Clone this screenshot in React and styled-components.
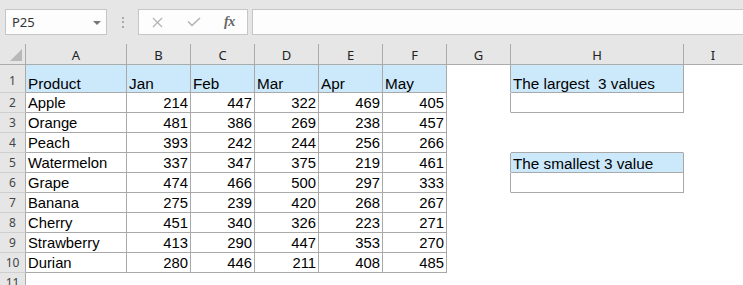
import React from 'react';
import styled, { createGlobalStyle } from 'styled-components';

const Global = createGlobalStyle`
  html, body { margin: 0; padding: 0; background: #ffffff; overflow: hidden; }
  body { font-family: "Liberation Sans", Arial, sans-serif; }
`;

const Page = styled.div`
  width: 743px;
  height: 285px;
  overflow: hidden;
  background: #ffffff;
`;

const TopBar = styled.div`
  display: flex;
  align-items: flex-start;
  height: 44px;
  box-sizing: border-box;
  padding: 9px 0 0 5px;
  background: #e6e6e6;
`;

const NameBox = styled.div`
  width: 102px;
  height: 26px;
  box-sizing: border-box;
  border: 1px solid #c6c6c6;
  background: #fdfdfd;
  display: flex;
  align-items: center;
  justify-content: space-between;
  padding: 0 5px 0 6px;
  font-family: "Noto Sans", "Open Sans", sans-serif;
  font-size: 13px;
  color: #333;
`;

const Caret = styled.span`
  width: 0;
  height: 0;
  border-left: 4px solid transparent;
  border-right: 4px solid transparent;
  border-top: 4px solid #777;
  margin-top: 1px;
`;

const Grip = styled.div`
  width: 31px;
  height: 26px;
  display: flex;
  flex-direction: column;
  align-items: center;
  justify-content: center;
  gap: 2.5px;
`;

const GripDot = styled.span`
  width: 2px;
  height: 2px;
  background: #a8a8a8;
`;

const FxBox = styled.div`
  width: 110px;
  height: 26px;
  box-sizing: border-box;
  border: 1px solid #c6c6c6;
  background: #fdfdfd;
  display: flex;
  align-items: center;
  padding-left: 13px;
  gap: 24px;
`;

const FxText = styled.span`
  font-family: "Liberation Serif", "Times New Roman", serif;
  font-style: italic;
  font-weight: bold;
  font-size: 14px;
  color: #666;
  letter-spacing: -0.5px;
  margin-left: -1px;
`;

const FormulaInput = styled.div`
  flex: 1;
  margin-left: 4px;
  height: 26px;
  box-sizing: border-box;
  border: 1px solid #c6c6c6;
  border-right: none;
  background: #fdfdfd;
`;

const Sheet = styled.div`
  display: grid;
  grid-template-columns: 26px 101px 64px 64px 64px 64px 64px 64px 173px 1fr;
  grid-template-rows: 21px 28px repeat(10, 20px) 20px;
`;

const Corner = styled.div`
  position: relative;
  background: #e6e6e6;
  box-sizing: border-box;
  border-right: 1px solid #ababab;
  border-bottom: 1px solid #ababab;
`;

const CornerTri = styled.span`
  position: absolute;
  right: 3px;
  bottom: 3px;
  width: 0;
  height: 0;
  border-left: 12px solid transparent;
  border-bottom: 12px solid #b8b8b8;
`;

const ColHead = styled.div`
  background: #e6e6e6;
  box-sizing: border-box;
  border-right: 1px solid ${p => (p.$last ? 'transparent' : '#ababab')};
  border-bottom: 1px solid #ababab;
  display: flex;
  align-items: center;
  justify-content: center;
  font-family: "Noto Sans", "Open Sans", sans-serif;
  font-size: 13px;
  color: #222;
  padding-top: 1px;
`;

const RowHead = styled.div`
  background: #e6e6e6;
  box-sizing: border-box;
  border-right: 1px solid #ababab;
  border-bottom: 1px solid #cfcfcf;
  display: flex;
  align-items: ${p => (p.$tall ? 'flex-end' : 'center')};
  justify-content: center;
  padding-bottom: ${p => (p.$tall ? '3px' : '0')};
  font-family: "Noto Sans", "Open Sans", sans-serif;
  font-size: 12px;
  color: #444;
`;

const Cell = styled.div`
  box-sizing: border-box;
  background: ${p => (p.$fill ? '#cce9fc' : '#ffffff')};
  border-right: 1px solid ${p => (p.$r ? '#a9a9a9' : 'transparent')};
  border-bottom: 1px solid ${p => (p.$b ? '#a9a9a9' : 'transparent')};
  display: flex;
  align-items: flex-end;
  justify-content: ${p => (p.$num ? 'flex-end' : 'flex-start')};
  padding: 0 2px 0 2px;
  font-family: "Liberation Sans", Arial, sans-serif;
  font-size: ${p => (p.$big ? '15.3px' : '14.8px')};
  line-height: 17px;
  color: #000;
  white-space: pre;
  overflow: hidden;
`;

const Icon = ({ children, w, h }) => (
  <svg width={w} height={h} viewBox={`0 0 ${w} ${h}`} fill="none">
    {children}
  </svg>
);

const cols = ['A', 'B', 'C', 'D', 'E', 'F', 'G', 'H', 'I'];
const header = ['Product', 'Jan', 'Feb', 'Mar', 'Apr', 'May'];
const data = [
  ['Apple', 214, 447, 322, 469, 405],
  ['Orange', 481, 386, 269, 238, 457],
  ['Peach', 393, 242, 244, 256, 266],
  ['Watermelon', 337, 347, 375, 219, 461],
  ['Grape', 474, 466, 500, 297, 333],
  ['Banana', 275, 239, 420, 268, 267],
  ['Cherry', 451, 340, 326, 223, 271],
  ['Strawberry', 413, 290, 447, 353, 270],
  ['Durian', 280, 446, 211, 408, 485],
];

const hLabels = { 1: 'The largest  3 values', 5: 'The smallest 3 value' };

function buildRow(r) {
  const cells = [];
  for (let c = 0; c < 6; c++) {
    if (r === 1) {
      cells.push(
        <Cell key={c} $fill $r $b $big>{header[c]}</Cell>
      );
    } else if (r <= 10) {
      const v = data[r - 2][c];
      cells.push(
        <Cell key={c} $r $b $num={c > 0}>{v}</Cell>
      );
    } else {
      cells.push(<Cell key={c} />);
    }
  }
  const hBox = r === 1 || r === 2 || r === 5 || r === 6;
  cells.push(<Cell key="G" $r={hBox} />);
  cells.push(
    <Cell key="H" $r={hBox} $b={hBox || r === 4} $fill={r === 1 || r === 5} $big>
      {hLabels[r] || ''}
    </Cell>
  );
  cells.push(<Cell key="I" />);
  return cells;
}

export default function App() {
  const rows = Array.from({ length: 11 }, (_, i) => i + 1);
  return (
    <Page>
      <Global />
      <TopBar>
        <NameBox>
          <span>P25</span>
          <Caret />
        </NameBox>
        <Grip>
          <GripDot />
          <GripDot />
          <GripDot />
        </Grip>
        <FxBox>
          <Icon w={11} h={11}>
            <path d="M1 1 L10 10 M10 1 L1 10" stroke="#b4b4b4" strokeWidth="1.3" />
          </Icon>
          <Icon w={14} h={10}>
            <path d="M1 4.5 L5 8.5 L13 1" stroke="#b4b4b4" strokeWidth="1.6" />
          </Icon>
          <FxText>fx</FxText>
        </FxBox>
        <FormulaInput />
      </TopBar>
      <Sheet>
        <Corner>
          <CornerTri />
        </Corner>
        {cols.map((c, i) => (
          <ColHead key={c} $last={i === cols.length - 1}>{c}</ColHead>
        ))}
        {rows.map(r => (
          <React.Fragment key={r}>
            <RowHead $tall={r === 1}>{r}</RowHead>
            {buildRow(r)}
          </React.Fragment>
        ))}
      </Sheet>
    </Page>
  );
}
